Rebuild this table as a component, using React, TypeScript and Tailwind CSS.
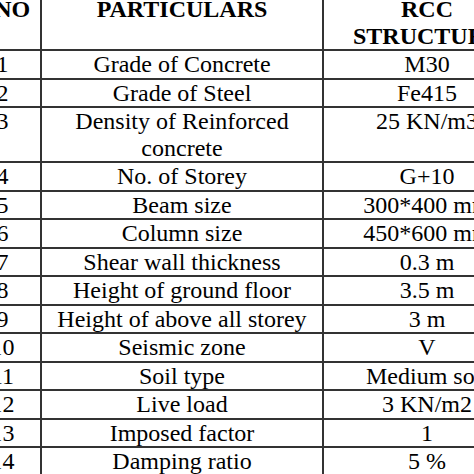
import React from 'react';

const rows: [string, string, string][] = [
  ['1', 'Grade of Concrete', 'M30'],
  ['2', 'Grade of Steel', 'Fe415'],
  ['3', 'Density of Reinforced concrete', '25 KN/m3'],
  ['4', 'No. of Storey', 'G+10'],
  ['5', 'Beam size', '300*400 mm'],
  ['6', 'Column size', '450*600 mm'],
  ['7', 'Shear wall thickness', '0.3 m'],
  ['8', 'Height of ground floor', '3.5 m'],
  ['9', 'Height of above all storey', '3 m'],
  ['10', 'Seismic zone', 'V'],
  ['11', 'Soil type', 'Medium soil'],
  ['12', 'Live load', '3 KN/m2'],
  ['13', 'Imposed factor', '1'],
  ['14', 'Damping ratio', '5 %'],
];

const App = () => {
  return (
    <div className="w-[474px] h-[474px] overflow-hidden bg-white">
      <table
        className="table-fixed border-collapse w-[567px] min-w-[567px] -ml-[37px] -mt-[6px] text-black text-[24px] leading-[26.5px] text-center"
        style={{ fontFamily: '"Liberation Serif", "Times New Roman", serif' }}
      >
        <colgroup>
          <col className="w-[77px]" />
          <col className="w-[282px]" />
          <col className="w-[208px]" />
        </colgroup>
        <thead>
          <tr>
            <th className="border-2 border-[#333] align-top p-0 font-bold">S.NO</th>
            <th className="border-2 border-[#333] align-top p-0 font-bold">PARTICULARS</th>
            <th className="border-2 border-[#333] align-top p-0 font-bold">
              RCC
              <br />
              STRUCTURE
            </th>
          </tr>
        </thead>
        <tbody>
          {rows.map(([no, name, value]) => (
            <tr key={no}>
              <td className="border-2 border-[#333] align-top p-0">{no}</td>
              <td className="border-2 border-[#333] align-top p-0 whitespace-nowrap">
                {no === '3' ? (
                  <>
                    Density of Reinforced
                    <br />
                    concrete
                  </>
                ) : (
                  name
                )}
              </td>
              <td className="border-2 border-[#333] align-top p-0 whitespace-nowrap">{value}</td>
            </tr>
          ))}
        </tbody>
      </table>
    </div>
  );
};

export default App;
